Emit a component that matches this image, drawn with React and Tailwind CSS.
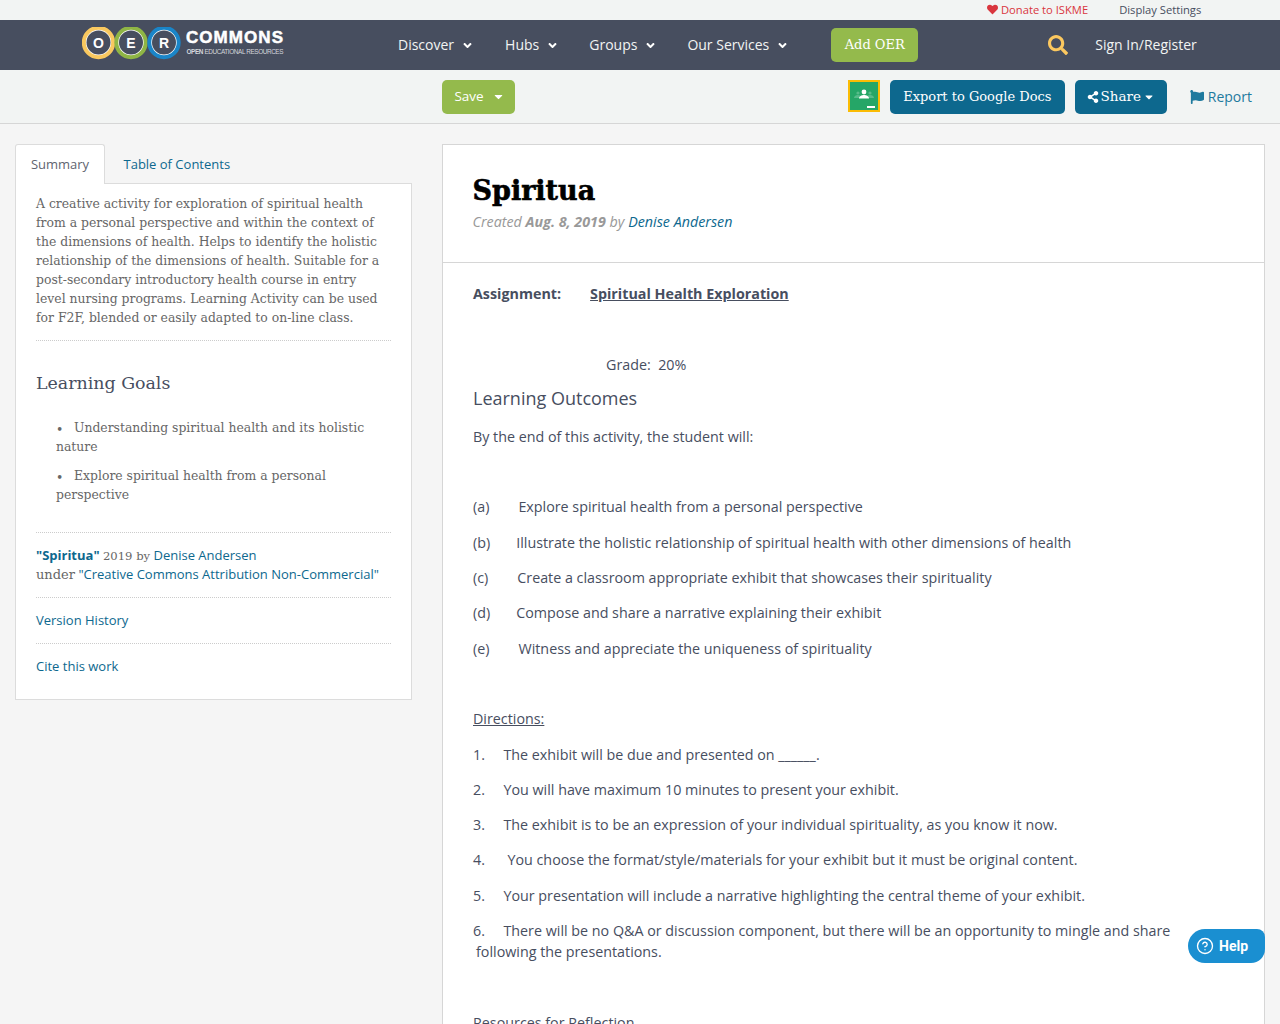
import React from "react";
import { FaHeart, FaSearch, FaFlag, FaShareAlt, FaCaretDown, FaAngleDown } from "react-icons/fa";
import { CircleHelp } from "lucide-react";

const sans = { fontFamily: '"Open Sans", sans-serif' };
const serif = { fontFamily: '"DejaVu Serif", serif' };

function Logo() {
  const ring = (cx, c, l) => (
    <g key={l}>
      <circle cx={cx} cy="15.5" r="15" fill="#fff" />
      <circle cx={cx} cy="15.5" r="14.7" fill="none" stroke={c} strokeWidth="4" />
      <circle cx={cx} cy="15.5" r="12" fill="#474e5f" />
      <text x={cx} y="20.5" textAnchor="middle" fontFamily="Liberation Sans" fontWeight="700" fontSize="14" fill="#fff">{l}</text>
    </g>
  );
  return (
    <svg width="203" height="36" viewBox="0 0 203 36" className="shrink-0">
      {ring(16.5, "#f9c85f", "O")}
      {ring(49, "#8fb545", "E")}
      {ring(82, "#1a85c8", "R")}
      <text x="104" y="16" fontFamily="Liberation Sans" fontWeight="700" fontSize="17" fill="#fff" stroke="#fff" strokeWidth="0.5" textLength="97">COMMONS</text>
      <text x="104.5" y="26.5" fontFamily="Liberation Sans" fontSize="6.4" fill="#d5d7dc" textLength="97"><tspan fontWeight="700">OPEN</tspan> EDUCATIONAL RESOURCES</text>
    </svg>
  );
}

function NavItem({ label, className }) {
  return (
    <a className={"mb-[2px] flex items-center text-[14px] text-[#f2f4f3] " + className}>
      {label}
      <FaAngleDown className="ml-[7px] mt-[2px] text-[13px] text-white" />
    </a>
  );
}

function Classroom() {
  return (
    <svg width="32" height="32" viewBox="0 0 32 32" className="mb-[2px] shrink-0">
      <rect x="1" y="1" width="30" height="30" fill="#25a667" stroke="#fbbc04" strokeWidth="2" />
      <circle cx="10" cy="13" r="1.6" fill="#57bb8a" />
      <circle cx="22" cy="13" r="1.6" fill="#57bb8a" />
      <path d="M6 18c0-2 2-3 4-3s4 1 4 3zM18 18c0-2 2-3 4-3s4 1 4 3z" fill="#57bb8a" />
      <circle cx="16" cy="12" r="2.4" fill="#fff" />
      <path d="M11 18.5c0-2.4 2.5-3.6 5-3.6s5 1.2 5 3.6z" fill="#fff" />
      <rect x="19" y="26" width="8" height="2" fill="#fff" />
    </svg>
  );
}

const P = ({ children, className = "" }) => <p className={"mb-[14.3px] " + className}>{children}</p>;

export default function App() {
  return (
    <div className="relative h-screen overflow-hidden bg-[#f5f5f5] text-[#474e5f]" style={sans}>
      <div className="flex h-5 items-center bg-[#f2f4f3] text-[11.2px]">
        <a className="ml-[987px] flex items-center text-[#d9363e]">
          <FaHeart className="mr-[3px] text-[11px]" />Donate to ISKME
        </a>
        <a className="ml-[31px] text-[#474e5f]">Display Settings</a>
      </div>

      <nav className="flex h-[50px] items-center bg-[#474e5f]">
        <div className="ml-[82px]"><Logo /></div>
        <NavItem label="Discover" className="ml-[113px]" />
        <NavItem label="Hubs" className="ml-[31px]" />
        <NavItem label="Groups" className="ml-[30px]" />
        <NavItem label="Our Services" className="ml-[30px]" />
        <a className="ml-[42px] flex h-[34px] w-[87px] items-center justify-center rounded-[5px] bg-[#94ba4c] text-[13px] text-white" style={serif}>Add OER</a>
        <FaSearch className="ml-[130px] text-[20px] text-[#fcc85f]" />
        <a className="mb-[2px] ml-[27px] text-[14px] text-[#f2f4f3]">Sign In/Register</a>
      </nav>

      <div className="flex h-[54px] items-center border-b border-[#d6d6d6] bg-[#f2f4f3]">
        <button className="ml-[442px] flex h-[34px] w-[73px] items-center justify-center rounded-[5px] bg-[#94ba4c] pl-[2px] text-[13.5px] text-white">
          Save<FaCaretDown className="ml-[8px] text-[13px]" />
        </button>
        <div className="ml-auto flex items-center pr-[28px]">
          <Classroom />
          <button className="ml-[10px] flex h-[34px] w-[175px] items-center justify-center whitespace-nowrap rounded-[5px] bg-[#0d688e] text-[13px] text-white" style={serif}>Export to Google Docs</button>
          <button className="ml-[10px] flex h-[34px] w-[92px] items-center justify-center rounded-[5px] bg-[#0d688e] text-[13.5px] text-white" style={serif}>
            <FaShareAlt className="mr-[2px] text-[12px]" />Share<FaCaretDown className="ml-[2px] text-[12px]" />
          </button>
          <a className="ml-[23px] flex items-center text-[14px] text-[#1f7a9e]">
            <FaFlag className="mr-[4px] text-[14px]" />Report
          </a>
        </div>
      </div>

      <div className="flex items-start pl-[15px] pt-5">
        <aside className="w-[397px] shrink-0">
          <div className="flex h-10 items-stretch text-[13px]">
            <div className="relative z-10 flex h-10 w-[90px] items-center justify-center rounded-t-[3px] border border-b-0 border-[#dcdcdc] bg-white text-[#5f6470]">Summary</div>
            <div className="ml-[18.5px] mt-[1px] flex items-center text-[#0d688e]">Table of Contents</div>
          </div>
          <div className="-mt-px border border-[#dcdcdc] bg-white px-5 pb-[23px] pt-[10px]">
            <div className="whitespace-nowrap text-[12.4px] leading-[19px] text-[#666]" style={serif}>
              A creative activity for exploration of spiritual health<br />
              from a personal perspective and within the context of<br />
              the dimensions of health. Helps to identify the holistic<br />
              relationship of the dimensions of health. Suitable for a<br />
              post-secondary introductory health course in entry<br />
              level nursing programs. Learning Activity can be used<br />
              for F2F, blended or easily adapted to on-line class.
            </div>
            <div className="mt-[13px] border-t border-dotted border-[#ccc]" />
            <h3 className="mt-[30px] text-[17.4px] leading-6 text-[#474e5f]" style={serif}>Learning Goals</h3>
            <ul className="mt-[23px] pl-5 text-[12.4px] leading-[19px] text-[#666]" style={serif}>
              <li className="mb-[10px]">
                <span className="relative">
                  <span className="absolute left-0 top-0">•</span>
                </span>
                <span className="ml-[18px]">Understanding spiritual health and its holistic</span><br />nature
              </li>
              <li className="mb-[10px]">
                <span className="relative">
                  <span className="absolute left-0 top-0">•</span>
                </span>
                <span className="ml-[18px]">Explore spiritual health from a personal</span><br />perspective
              </li>
            </ul>
            <div className="mt-[28px] border-t border-dotted border-[#ccc]" />
            <div className="mt-[13px] text-[13px] leading-[19px] text-[#666]">
              <div className="h-[19px] whitespace-nowrap">
                <a className="font-bold text-[#0d688e]">"Spiritua"</a> <span className="text-[11.6px] leading-none" style={serif}>2019 by</span> <a className="text-[#0d688e]">Denise Andersen</a>
              </div>
              <div className="h-[19px] whitespace-nowrap">
                <span className="text-[13px] leading-none" style={serif}>under</span> <a className="text-[#0d688e]">"Creative Commons Attribution Non-Commercial"</a>
              </div>
            </div>
            <div className="mt-[13px] border-t border-dotted border-[#ccc]" />
            <div className="mt-[13px] text-[13px] leading-[19px] text-[#0d688e]">Version History</div>
            <div className="mt-[13px] border-t border-dotted border-[#ccc]" />
            <div className="mt-[13px] text-[13px] leading-[19px] text-[#0d688e]">Cite this work</div>
          </div>
        </aside>

        <main className="ml-[30px] w-[823px] shrink-0 border border-[#d6d6d6] bg-white">
          <header className="h-[118px] border-b border-[#d6d6d6] px-[29.5px] pt-[28px]">
            <h1 className="text-[27px] font-bold leading-9 text-black [-webkit-text-stroke:0.6px_black]" style={serif}>Spiritua</h1>
            <p className="mt-[3px] text-[14.3px] italic leading-5 text-[#999]">
              Created <b>Aug. 8, 2019</b> by <a className="text-[#0d688e]">Denise Andersen</a>
            </p>
          </header>
          <article className="px-[30px] pt-[20px] text-[14.3px] leading-[21px] text-[#474e5f]">
            <P className="font-bold">
              Assignment:<span className="ml-[29px] underline">Spiritual Health Exploration</span>
            </P>
            <P>&nbsp;</P>
            <p className="mb-[11.3px] pl-[133px]">Grade:&nbsp; 20%</p>
            <h2 className="mb-[16px] text-[18px] leading-6">Learning Outcomes</h2>
            <P>By the end of this activity, the student will:</P>
            <P>&nbsp;</P>
            <P>(a)<span className="ml-[29px]">Explore spiritual health from a personal perspective</span></P>
            <P>(b)<span className="ml-[26px]">Illustrate the holistic relationship of spiritual health with other dimensions of health</span></P>
            <P>(c)<span className="ml-[29px]">Create a classroom appropriate exhibit that showcases their spirituality</span></P>
            <P>(d)<span className="ml-[26px]">Compose and share a narrative explaining their exhibit</span></P>
            <P>(e)<span className="ml-[29px]">Witness and appreciate the uniqueness of spirituality</span></P>
            <P>&nbsp;</P>
            <P className="underline">Directions:</P>
            <P>1.<span className="ml-[18.5px]">The exhibit will be due and presented on ______.</span></P>
            <P>2.<span className="ml-[18.5px]">You will have maximum 10 minutes to present your exhibit.</span></P>
            <P>3.<span className="ml-[18.5px]">The exhibit is to be an expression of your individual spirituality, as you know it now.</span></P>
            <P>4.<span className="ml-[22.5px]">You choose the format/style/materials for your exhibit but it must be original content.</span></P>
            <P>5.<span className="ml-[18.5px]">Your presentation will include a narrative highlighting the central theme of your exhibit.</span></P>
            <P>6.<span className="ml-[18.5px]">There will be no Q&amp;A or discussion component, but there will be an opportunity to mingle and share</span><br /><span className="ml-[3px]">following the presentations.</span></P>
            <P>&nbsp;</P>
            <P>Resources for Reflection</P>
          </article>
        </main>
      </div>

      <button className="absolute left-[1188px] top-[929px] flex h-[34px] w-[77px] items-center rounded-l-[17px] rounded-tr-[8px] rounded-br-[14px] bg-[#1a8fd1] pl-[8px] text-[14px] font-bold text-white" style={{ fontFamily: "Roboto, sans-serif" }}>
        <CircleHelp size={18} strokeWidth={1.8} className="mr-[5px]" />Help
      </button>
    </div>
  );
}
